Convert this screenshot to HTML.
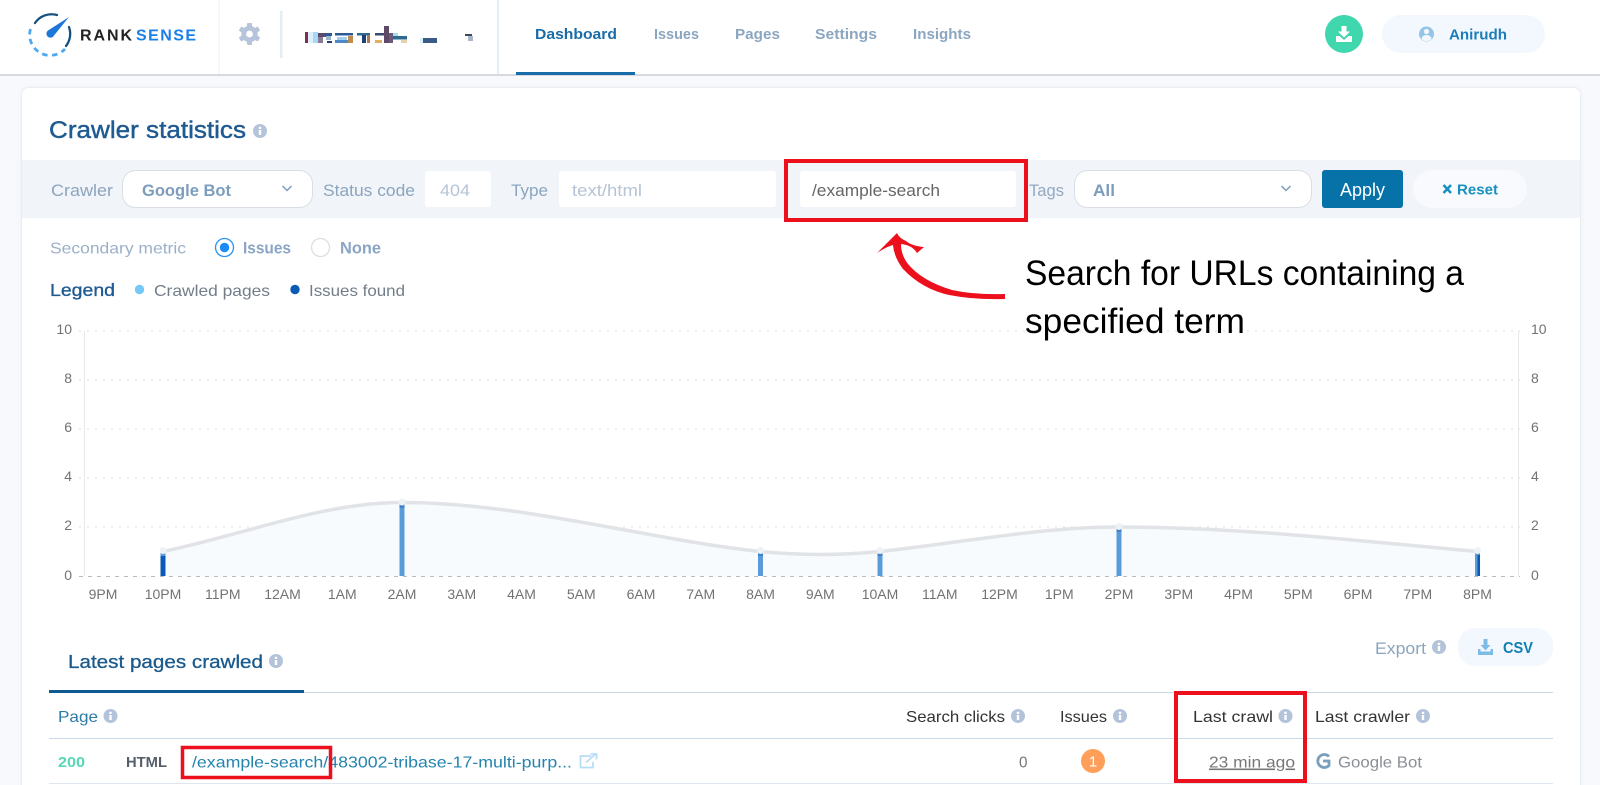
<!DOCTYPE html>
<html lang="en">
<head>
<meta charset="utf-8">
<title>RankSense - Crawler statistics</title>
<style>
html,body{margin:0;padding:0;background:#f7f9fc;width:1600px;height:785px;overflow:hidden}
svg{display:block}
text{font-family:"Liberation Sans",sans-serif;white-space:pre}
.b{font-weight:700}
.nav{font-size:14.5px;font-weight:700;fill:#8ba6c1}
.lab{font-size:17px;fill:#8ba5be}
.th{font-size:16px;fill:#333}
.ax{font-size:14px;fill:#727272}
</style>
</head>
<body>
<svg xmlns="http://www.w3.org/2000/svg" width="1600" height="785" viewBox="0 0 1600 785">
<defs>
  <g id="info">
    <circle cx="0" cy="0" r="7" fill="#b3c3d9"/>
    <rect x="-1.2" y="-4.2" width="2.4" height="2.2" fill="#fff"/>
    <rect x="-1.2" y="-1" width="2.4" height="5" fill="#fff"/>
  </g>
  <filter id="sh" x="-2%" y="-2%" width="104%" height="104%">
    <feDropShadow dx="0" dy="0" stdDeviation="1.5" flood-color="#c8d0da" flood-opacity=".7"/>
  </filter>
</defs>

<!-- page + header -->
<rect width="1600" height="785" fill="#f7f9fc"/>
<rect x="22" y="88" width="1558" height="720" rx="7" fill="#fff" filter="url(#sh)"/>
<rect width="1600" height="74" fill="#fff"/>
<rect y="74" width="1600" height="2" fill="#d6d9dd"/>
<rect x="218.500" y="0" width="1" height="74" fill="#e8f0f7"/>
<rect x="280" y="11" width="2.500" height="47" fill="#e3edf6"/>
<rect x="497" y="0" width="2" height="74" fill="#e3edf6"/>

<!-- logo -->
<path d="M35 23A20 20 0 0 1 57 15" fill="none" stroke="#17507f" stroke-width="2.300" stroke-linecap="round"/>
<path d="M69 27A20 20 0 0 1 66 46" fill="none" stroke="#17507f" stroke-width="2.300" stroke-linecap="round"/>
<path d="M30.500 29A20.500 20.500 0 0 0 65 49" fill="none" stroke="#4da9f2" stroke-width="2.800" stroke-dasharray="5.500 4.500"/>
<path d="M69 17L54 35.500a4 4 0 1 1-6-5Z" fill="#1b78d8"/>
<text x="80" y="40.500" class="b" font-size="16" fill="#222" textLength="52" lengthAdjust="spacing">RANK</text>
<text x="136" y="40.500" class="b" font-size="16" fill="#1a7fe8" textLength="60" lengthAdjust="spacing">SENSE</text>

<!-- gear -->
<g fill="#b5c4da">
<rect x="247" y="23" width="5" height="22" rx="1"/>
<rect x="247" y="23" width="5" height="22" rx="1" transform="rotate(60 249.500 34)"/>
<rect x="247" y="23" width="5" height="22" rx="1" transform="rotate(120 249.500 34)"/>
</g>
<circle cx="249.500" cy="34" r="5.800" fill="none" stroke="#b5c4da" stroke-width="4.800"/>
<circle cx="249.500" cy="34" r="3.400" fill="#fff"/>

<!-- obscured site name -->
<g>
<rect x="305" y="32" width="3" height="11" fill="#7a3050"/><rect x="308" y="32" width="5" height="11" fill="#dfeefa"/><rect x="313" y="32" width="5" height="11" fill="#a8d8f5"/>
<rect x="318" y="33" width="8" height="4" fill="#5a4a70"/><rect x="318" y="37" width="5" height="6" fill="#8a7a95"/>
<rect x="326" y="33" width="6" height="3" fill="#2d5a95"/><rect x="326" y="36" width="5" height="4" fill="#9cb6cc"/><rect x="327" y="41" width="5" height="2" fill="#1f3f75"/>
<rect x="335" y="33" width="18" height="2.500" fill="#2d5a95"/><rect x="337" y="37" width="10" height="3" fill="#a5cdee"/><rect x="335" y="40" width="13" height="3" fill="#4a8ac9"/><rect x="348" y="36" width="5" height="7" fill="#c08a50"/>
<rect x="357" y="33" width="13" height="2.500" fill="#2f6a90"/><rect x="362" y="35" width="4" height="8" fill="#1f3f75"/>
<rect x="367" y="35" width="3" height="8" fill="#b07a50"/>
<rect x="375" y="33" width="9" height="2.500" fill="#3a4a70"/><rect x="375" y="40" width="7" height="3" fill="#e0b060"/>
<rect x="384" y="26" width="5" height="17" fill="#5e4a68"/><rect x="389" y="33" width="4" height="10" fill="#6a5a78"/>
<rect x="393" y="33" width="5" height="4" fill="#a8dcf0"/><rect x="393" y="36" width="14" height="3.500" fill="#2e6a90"/><rect x="401" y="40" width="6" height="3" fill="#e8d0a8"/>
<rect x="420" y="38" width="3.500" height="5" fill="#d5f4fb"/><rect x="423" y="38" width="14" height="5" fill="#3c5a85"/>
<rect x="465" y="34" width="7" height="2" fill="#3a4a60"/><rect x="468" y="36" width="5" height="5" fill="#a9b7c8"/>
</g>

<!-- nav -->
<text x="535" y="39" class="nav" style="fill:#1a6ca8" textLength="82" lengthAdjust="spacingAndGlyphs">Dashboard</text>
<text x="654" y="39" class="nav" textLength="45" lengthAdjust="spacingAndGlyphs">Issues</text>
<text x="735" y="39" class="nav" textLength="45" lengthAdjust="spacingAndGlyphs">Pages</text>
<text x="815" y="39" class="nav" textLength="62" lengthAdjust="spacingAndGlyphs">Settings</text>
<text x="913" y="39" class="nav" textLength="58" lengthAdjust="spacingAndGlyphs">Insights</text>
<rect x="516" y="72" width="119" height="3" fill="#1a6ca8"/>

<!-- header right -->
<circle cx="1344" cy="34" r="19" fill="#40d6ae"/>
<path d="M1341.500 26h5v5.500h3.500L1344 37.500 1338 31.500h3.500Z" fill="#fff"/>
<path d="M1336 36h3.500l4.500 4 4.500-4h3.500V42h-16Z" fill="#fff"/>
<rect x="1382" y="15" width="163" height="38" rx="19" fill="#f3f8fe"/>
<circle cx="1426.500" cy="34" r="7.500" fill="#95c5e6"/>
<circle cx="1426.500" cy="31.500" r="2.600" fill="#f3f8fe"/>
<path d="M1421.500 39a5 4 0 0 1 10 0a7 7 0 0 1-10 0Z" fill="#f3f8fe"/>
<text x="1449" y="39.500" class="b" font-size="15" fill="#1a7db8" textLength="58" lengthAdjust="spacingAndGlyphs">Anirudh</text>

<!-- heading -->
<text x="49" y="138" font-size="24" fill="#1f5b92" stroke="#1f5b92" stroke-width=".45" textLength="197" lengthAdjust="spacingAndGlyphs">Crawler statistics</text>
<use href="#info" x="260" y="131"/>

<!-- filter bar -->
<rect x="22" y="160" width="1558" height="58" fill="#f1f4f9"/>
<text x="51" y="196" class="lab" textLength="62" lengthAdjust="spacingAndGlyphs">Crawler</text>
<rect x="122.500" y="170.500" width="190" height="37" rx="13" fill="#fff" stroke="#d9dee5"/>
<text x="142" y="196" class="b" font-size="16.500" fill="#7d9dbd" textLength="89" lengthAdjust="spacingAndGlyphs">Google Bot</text>
<path d="M282.500 186l4.500 4.500 4.500-4.500" fill="none" stroke="#7d9dbd" stroke-width="1.500"/>
<text x="323" y="196" class="lab" textLength="92" lengthAdjust="spacingAndGlyphs">Status code</text>
<rect x="425" y="171" width="66" height="36" rx="3" fill="#fff"/>
<text x="440" y="196" font-size="16.500" fill="#b5c4d6" textLength="30" lengthAdjust="spacingAndGlyphs">404</text>
<text x="511" y="196" class="lab" textLength="37" lengthAdjust="spacingAndGlyphs">Type</text>
<rect x="559" y="171" width="217" height="36" rx="3" fill="#fff"/>
<text x="572" y="196" font-size="16.500" fill="#b5c4d6" textLength="70" lengthAdjust="spacingAndGlyphs">text/html</text>
<rect x="800" y="171" width="216" height="36" rx="3" fill="#fff"/>
<text x="812" y="196" font-size="17" fill="#666" textLength="128" lengthAdjust="spacingAndGlyphs">/example-search</text>
<text x="1029" y="196" class="lab" style="fill:#93a9c2" textLength="35" lengthAdjust="spacingAndGlyphs">Tags</text>
<rect x="1074.500" y="170.500" width="237" height="37" rx="13" fill="#fff" stroke="#d9dee5"/>
<text x="1093" y="196" class="b" font-size="16.500" fill="#7d9dbd" textLength="22" lengthAdjust="spacingAndGlyphs">All</text>
<path d="M1281.500 186l4.500 4.500 4.500-4.500" fill="none" stroke="#7d9dbd" stroke-width="1.500"/>
<rect x="1322" y="170" width="81" height="38" rx="3" fill="#0672a8"/>
<text x="1340" y="196" font-size="18" fill="#fff" textLength="45" lengthAdjust="spacingAndGlyphs">Apply</text>
<rect x="1413" y="170" width="114" height="38" rx="19" fill="#f8fafd"/>
<path d="M1443.500 185l7.500 8M1451 185l-7.500 8" fill="none" stroke="#1a90c0" stroke-width="2.500"/>
<text x="1457" y="194.500" class="b" font-size="15" fill="#1a90c0" textLength="41" lengthAdjust="spacingAndGlyphs">Reset</text>

<!-- red box + arrow -->
<rect x="786" y="161" width="240" height="59" fill="none" stroke="#ec0f1c" stroke-width="4"/>
<path d="M897 233L877 253Q886 247 893 245Q894 257 903 269Q922 289 949 295Q975 300 1005 299V294Q975 295 952 290Q922 281 908 264Q901 255 901 244Q912 245 917 253L924 247Q912 246 906 241Q899 238 897 233Z" fill="#ec0f1c"/>

<!-- secondary metric -->
<text x="50" y="253.500" font-size="16" fill="#9bb0c8" textLength="136" lengthAdjust="spacingAndGlyphs">Secondary metric</text>
<circle cx="224.500" cy="247.500" r="9" fill="#fff" stroke="#2a93f5" stroke-width="1.300"/>
<circle cx="224.500" cy="247.500" r="4.700" fill="#1a8cf5"/>
<text x="243" y="253.500" class="b" font-size="16.500" fill="#8ba5c4" textLength="48" lengthAdjust="spacingAndGlyphs">Issues</text>
<circle cx="320.500" cy="247.500" r="9" fill="#fff" stroke="#dcdfe4" stroke-width="1.300"/>
<text x="340" y="253.500" class="b" font-size="16.500" fill="#8ba5c4" textLength="41" lengthAdjust="spacingAndGlyphs">None</text>

<!-- legend -->
<text x="50" y="296" font-size="17.500" fill="#1f5b92" stroke="#1f5b92" stroke-width=".35" textLength="65" lengthAdjust="spacingAndGlyphs">Legend</text>
<circle cx="139.500" cy="289.500" r="4.700" fill="#74c9f8"/>
<text x="154" y="296" font-size="16" fill="#727d8a" textLength="116" lengthAdjust="spacingAndGlyphs">Crawled pages</text>
<circle cx="295" cy="289.500" r="4.700" fill="#0a5bb5"/>
<text x="309" y="296" font-size="16" fill="#727d8a" textLength="96" lengthAdjust="spacingAndGlyphs">Issues found</text>

<!-- chart grid -->
<g stroke="#dcdee1" stroke-width="1" stroke-dasharray="2 6" fill="none">
<path d="M79 331H1520"/><path d="M79 380H1520"/><path d="M79 429H1520"/><path d="M79 478H1520"/><path d="M79 527H1520"/>
</g>
<path d="M84.500 331V576M1518.500 331V576" stroke="#e6e8ea" stroke-width="1" fill="none"/>

<!-- chart area -->
<path d="M163 551.500C243 535 322 502.500 402 502.500C522 502.500 650 540 760.500 551.500C800 555.500 840 555.500 880 551.500C960 543 1040 527 1119 527C1239 527 1358 541 1477.500 551.500V576H163Z" fill="#f7fbfe"/>
<path d="M79 576.500H1520" stroke="#b9bbbe" stroke-width="1" stroke-dasharray="4 5" fill="none"/>
<g>
<rect x="160.500" y="551" width="5" height="25" fill="#0a5bb5"/><rect x="160.500" y="551" width="5" height="5" fill="#5b9bd9"/>
<rect x="399.500" y="502" width="5" height="74" fill="#5b9bd9"/><rect x="399.500" y="502" width="5" height="6" fill="#3f82c8"/>
<rect x="758" y="551" width="5" height="25" fill="#5b9bd9"/><rect x="758" y="551" width="5" height="5" fill="#3f82c8"/>
<rect x="877.500" y="551" width="5" height="25" fill="#5b9bd9"/><rect x="877.500" y="551" width="5" height="5" fill="#3f82c8"/>
<rect x="1116.500" y="527" width="5" height="49" fill="#5b9bd9"/><rect x="1116.500" y="527" width="5" height="5" fill="#3f82c8"/>
<rect x="1475" y="551" width="5" height="25" fill="#5b9bd9"/><rect x="1477.500" y="555" width="2.500" height="21" fill="#0a5bb5"/>
</g>
<path d="M163 551.500C243 535 322 502.500 402 502.500C522 502.500 650 540 760.500 551.500C800 555.500 840 555.500 880 551.500C960 543 1040 527 1119 527C1239 527 1358 541 1477.500 551.500" fill="none" stroke="#e1e3e7" stroke-width="3.500"/>
<g fill="#edf2f7">
<circle cx="163" cy="550.500" r="3.500"/><circle cx="402" cy="502" r="3.500"/><circle cx="760.500" cy="550.500" r="3.500"/><circle cx="880" cy="550.500" r="3.500"/><circle cx="1119" cy="526.500" r="3.500"/><circle cx="1477.500" cy="550.500" r="3.500"/>
</g>

<!-- y axes -->
<g text-anchor="end">
<text class="ax" x="72" y="334">10</text><text class="ax" x="72" y="383">8</text><text class="ax" x="72" y="432">6</text><text class="ax" x="72" y="481">4</text><text class="ax" x="72" y="530">2</text><text class="ax" x="72" y="580">0</text>
</g>
<g>
<text class="ax" x="1531" y="334">10</text><text class="ax" x="1531" y="383">8</text><text class="ax" x="1531" y="432">6</text><text class="ax" x="1531" y="481">4</text><text class="ax" x="1531" y="530">2</text><text class="ax" x="1531" y="580">0</text>
</g>
<!-- x axis -->
<g text-anchor="middle">
<text class="ax" x="103" y="599">9PM</text><text class="ax" x="163" y="599">10PM</text><text class="ax" x="222.750" y="599">11PM</text><text class="ax" x="282.500" y="599">12AM</text><text class="ax" x="342.250" y="599">1AM</text><text class="ax" x="402" y="599">2AM</text><text class="ax" x="461.750" y="599">3AM</text><text class="ax" x="521.500" y="599">4AM</text><text class="ax" x="581.250" y="599">5AM</text><text class="ax" x="641" y="599">6AM</text><text class="ax" x="700.750" y="599">7AM</text><text class="ax" x="760.500" y="599">8AM</text><text class="ax" x="820.250" y="599">9AM</text><text class="ax" x="880" y="599">10AM</text><text class="ax" x="939.750" y="599">11AM</text><text class="ax" x="999.500" y="599">12PM</text><text class="ax" x="1059.250" y="599">1PM</text><text class="ax" x="1119" y="599">2PM</text><text class="ax" x="1178.750" y="599">3PM</text><text class="ax" x="1238.500" y="599">4PM</text><text class="ax" x="1298.250" y="599">5PM</text><text class="ax" x="1358" y="599">6PM</text><text class="ax" x="1417.750" y="599">7PM</text><text class="ax" x="1477.500" y="599">8PM</text>
</g>

<!-- annotation text -->
<text x="1025" y="285" font-size="35" fill="#000" textLength="439" lengthAdjust="spacingAndGlyphs">Search for URLs containing a</text>
<text x="1025" y="333" font-size="35" fill="#000" textLength="220" lengthAdjust="spacingAndGlyphs">specified term</text>

<!-- tab strip -->
<text x="68" y="668" font-size="18" fill="#1a5a8c" stroke="#1a5a8c" stroke-width=".3" textLength="195" lengthAdjust="spacingAndGlyphs">Latest pages crawled</text>
<use href="#info" x="276" y="661"/>
<text x="1375" y="654" font-size="17" fill="#8ba5be" textLength="51" lengthAdjust="spacingAndGlyphs">Export</text>
<use href="#info" x="1439" y="647"/>
<rect x="1458" y="628" width="95" height="38" rx="17" fill="#f3f8fe"/>
<path d="M1483.500 639h4v6h3l-5 5.500-5-5.500h3Z" fill="#7cbde8"/>
<path d="M1478 649h2.500v2.500h10V649h2.500v6h-15Z" fill="#7cbde8"/>
<text x="1503" y="653" class="b" font-size="16" fill="#0f7fb5" textLength="30" lengthAdjust="spacingAndGlyphs">CSV</text>

<rect x="49" y="692" width="1504" height="1" fill="#c9d9e8"/>
<rect x="49" y="690" width="255" height="3" fill="#0f5a93"/>

<!-- table head -->
<text x="58" y="722" font-size="16" fill="#2a7ba8" textLength="40" lengthAdjust="spacingAndGlyphs">Page</text>
<use href="#info" x="110.500" y="716"/>
<text x="906" y="722" class="th" textLength="99" lengthAdjust="spacingAndGlyphs">Search clicks</text>
<use href="#info" x="1018" y="716"/>
<text x="1060" y="722" class="th" textLength="47" lengthAdjust="spacingAndGlyphs">Issues</text>
<use href="#info" x="1120" y="716"/>
<text x="1193" y="722" class="th" textLength="80" lengthAdjust="spacingAndGlyphs">Last crawl</text>
<use href="#info" x="1285.500" y="716"/>
<text x="1315" y="722" class="th" textLength="95" lengthAdjust="spacingAndGlyphs">Last crawler</text>
<use href="#info" x="1423" y="716"/>
<rect x="49" y="738" width="1504" height="1" fill="#c9d9e8"/>

<!-- table row -->
<text x="58" y="767" class="b" font-size="15" fill="#56d8b5" textLength="27" lengthAdjust="spacingAndGlyphs">200</text>
<text x="126" y="767" class="b" font-size="14.500" fill="#555f6b" textLength="41" lengthAdjust="spacingAndGlyphs">HTML</text>
<text x="192" y="767.500" font-size="16" fill="#2384ae" textLength="380" lengthAdjust="spacingAndGlyphs">/example-search/483002-tribase-17-multi-purp...</text>
<path d="M591 756h-10.500v11.500H593V762" fill="none" stroke="#b9dcf5" stroke-width="1.800"/>
<path d="M586 762.500l9.500-8.500M590.500 754h6v5.500" fill="none" stroke="#b9dcf5" stroke-width="1.800"/>
<text x="1019" y="767.500" font-size="16" fill="#777" textLength="8.500" lengthAdjust="spacingAndGlyphs">0</text>
<circle cx="1093" cy="761" r="12" fill="#ff9f5a"/>
<text x="1093" y="766.500" font-size="15" fill="#fff" text-anchor="middle">1</text>
<text x="1209" y="767.500" font-size="16" fill="#777" text-decoration="underline" textLength="86" lengthAdjust="spacingAndGlyphs">23 min ago</text>
<path d="M1329 756.500A6.500 6.500 0 1 0 1329 765.500V761H1323" fill="none" stroke="#7a9fbd" stroke-width="2.800"/>
<text x="1338" y="767.500" font-size="16" fill="#8a8f96" textLength="84" lengthAdjust="spacingAndGlyphs">Google Bot</text>
<rect x="49" y="783" width="1504" height="1" fill="#dfe6ee"/>

<!-- red annotation boxes -->
<rect x="182.500" y="747.500" width="148" height="30" fill="none" stroke="#ec0f1c" stroke-width="3.500"/>
<rect x="1176" y="693" width="129" height="88" fill="none" stroke="#ec0f1c" stroke-width="4"/>
</svg>
</body>
</html>
